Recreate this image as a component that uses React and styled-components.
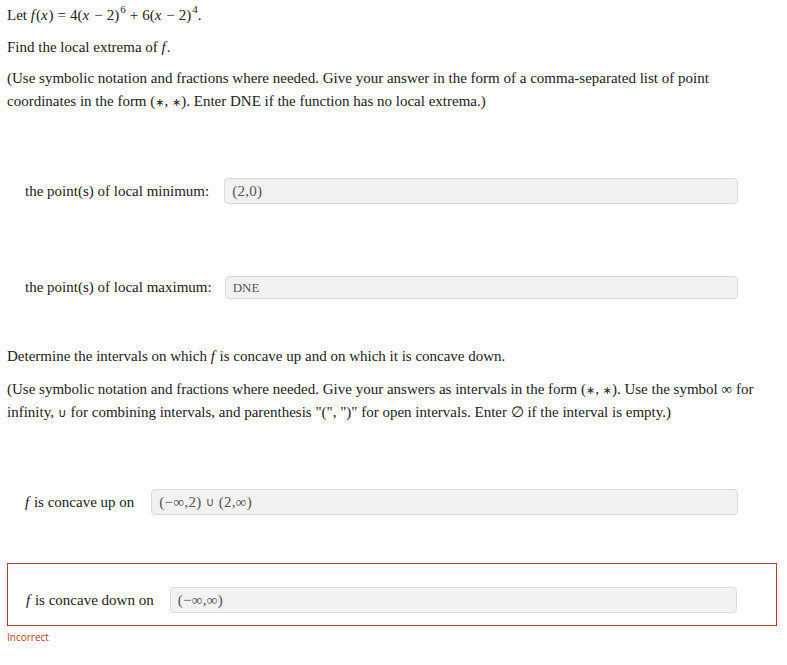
import React from 'react';
import styled, { createGlobalStyle } from 'styled-components';

const GlobalStyle = createGlobalStyle`
  html, body {
    margin: 0;
    padding: 0;
    background: #ffffff;
  }
  body {
    font-family: "Liberation Serif", "Times New Roman", serif;
    font-size: 15px;
    color: #222;
  }
`;

const Page = styled.div`
  width: 770px;
  padding: 4px 10px 20px 7px;
  display: flex;
  flex-direction: column;
`;

const Para = styled.p`
  margin: ${(p) => p.$top || 0}px 0 0;
  line-height: 23px;
  font-size: 15px;
`;

const Sup = styled.sup`
  font-size: 11px;
  vertical-align: 7px;
  line-height: 0;
  margin-left: 1px;
`;

const Var = styled.i`
  font-style: italic;
  margin-right: 1px;
`;

const Op = styled.span`
  margin: 0 4px;
`;

const Star = styled.span`
  font-family: "DejaVu Sans", sans-serif;
  font-size: 11px;
  line-height: 0;
`;

const Row = styled.div`
  display: flex;
  align-items: center;
  gap: ${(p) => p.$gap || 15}px;
  padding: 0 39px 0 18px;
  margin-top: ${(p) => p.$top || 0}px;
`;

const Label = styled.span`
  white-space: nowrap;
  font-size: 15px;
`;

const Field = styled.div`
  flex: 1;
  height: ${(p) => p.$h || 26}px;
  box-sizing: border-box;
  display: flex;
  align-items: center;
  padding-left: 7px;
  background: #f2f2f2;
  border: 1px solid #dcdcdc;
  border-radius: 4px;
  color: #555;
  font-size: ${(p) => p.$size || 15}px;
  letter-spacing: ${(p) => (p.$size ? 0 : 0.3)}px;
`;

const Cup = styled.span`
  font-family: "DejaVu Sans", sans-serif;
  font-size: 12px;
  line-height: 0;
  margin: 0 ${(p) => p.$right ?? 4}px 0 ${(p) => p.$left ?? 4}px;
`;

const WrongBox = styled.div`
  margin-top: 48px;
  height: 63px;
  box-sizing: border-box;
  border: 1px solid #c0392b;
  padding-top: 23px;
  display: flex;
  flex-direction: column;
`;

const Feedback = styled.div`
  margin-top: 4px;
  font-family: "Open Sans", "DejaVu Sans", sans-serif;
  font-size: 10px;
  line-height: 14px;
  color: #c0392b;
`;

const Inf = () => <span>∞</span>;

export default function App() {
  return (
    <>
      <GlobalStyle />
      <Page>
        <Para>
          Let <Var>f</Var>(<Var>x</Var>)<Op>=</Op>4(<Var>x</Var><Op>−</Op>2)<Sup>6</Sup><Op>+</Op>6(<Var>x</Var><Op>−</Op>2)<Sup>4</Sup>.
        </Para>
        <Para $top={9}>
          Find the local extrema of <Var>f</Var>.
        </Para>
        <Para $top={8}>
          (Use symbolic notation and fractions where needed. Give your answer in the form of a comma-separated list of point
          coordinates in the form (<Star>∗</Star>, <Star>∗</Star>). Enter DNE if the function has no local extrema.)
        </Para>

        <Row $top={65} $gap={15}>
          <Label>the point(s) of local minimum:</Label>
          <Field>(2,0)</Field>
        </Row>
        <Row $top={72} $gap={13}>
          <Label>the point(s) of local maximum:</Label>
          <Field $h={23} $size={13}>DNE</Field>
        </Row>

        <Para $top={46}>
          Determine the intervals on which <Var>f</Var> is concave up and on which it is concave down.
        </Para>
        <Para $top={10}>
          (Use symbolic notation and fractions where needed. Give your answers as intervals in the form (<Star>∗</Star>, <Star>∗</Star>). Use the symbol ∞ for
          infinity, <Cup $left={0}>∪</Cup>for combining intervals, and parenthesis "(", ")" for open intervals. Enter ∅ if the interval is empty.)
        </Para>

        <Row $top={65} $gap={17}>
          <Label><Var>f</Var> is concave up on</Label>
          <Field>
            (−<Inf />,2)<Cup>∪</Cup>(2,<Inf />)
          </Field>
        </Row>

        <WrongBox>
          <Row $gap={16}>
            <Label><Var>f</Var> is concave down on</Label>
            <Field>(−<Inf />,<Inf />)</Field>
          </Row>
        </WrongBox>
        <Feedback>Incorrect</Feedback>
      </Page>
    </>
  );
}
